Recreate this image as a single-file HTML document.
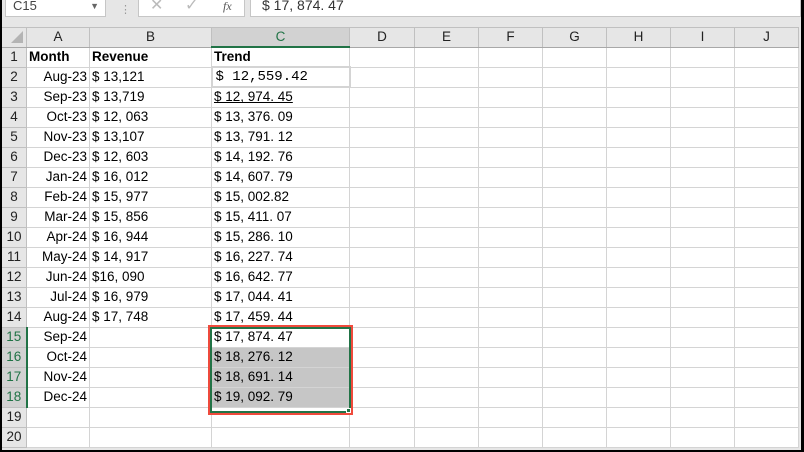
<!DOCTYPE html>
<html><head><meta charset="utf-8"><style>
*{margin:0;padding:0;box-sizing:border-box}
body{width:804px;height:452px;overflow:hidden;background:#e6e6e6;font-family:"Liberation Sans",sans-serif;position:relative}
.box{position:absolute;background:#fff;border:1px solid #c6c6c6;border-top:none}
table{position:absolute;left:1px;top:27px;border-collapse:collapse;table-layout:fixed;background:#fff}
td{border:1px solid #d4d4d4;height:20px;font-size:13.5px;color:#000;white-space:nowrap;overflow:hidden;padding:0 2px;line-height:18px}
tr.h td{background:#e6e6e6;height:19px;text-align:center;color:#222;border-color:#c0c0c0;border-bottom:1px solid #a8a8a8}
td.rh{background:#e6e6e6;text-align:center;color:#222;padding:0;border-color:#c0c0c0}
td.rs{background:#d2d2d2;color:#217346;border-right:2px solid #217346}
td.a{text-align:right}
td.g{background:#c6c6c6}
b{font-weight:bold}
</style></head><body>
<div style="position:absolute;left:0;top:0;width:2px;height:452px;background:#000;z-index:5"></div>
<div style="position:absolute;right:0;top:0;width:3px;height:452px;background:#000;z-index:5"></div>
<div style="position:absolute;left:0;bottom:0;width:804px;height:2px;background:#000;z-index:5"></div>
<div class="box" style="left:5px;top:0;width:101px;height:17px;font-size:13px;color:#444;padding-left:7px;line-height:12px">C15<span style="position:absolute;right:6px;top:0;font-size:9px;color:#666">▼</span></div>
<div style="position:absolute;left:120px;top:3px;font-size:11px;color:#999">⋮</div>
<div class="box" style="left:138px;top:0;width:107px;height:17px;font-size:16px;color:#bbb;line-height:12px"><span style="position:absolute;left:11px">✕</span><span style="position:absolute;left:46px">✓</span><span style="position:absolute;left:84px;font-style:italic;font-size:12px;color:#555;font-family:'Liberation Serif',serif">fx</span></div>
<div class="box" style="left:250px;top:0;width:551px;height:17px;font-size:14px;color:#333;padding-left:11px;line-height:11px">$ 17, 874. 47</div>
<table>
<colgroup><col style="width:25px"><col style="width:63px"><col style="width:122px"><col style="width:138px"><col style="width:65px"><col style="width:64px"><col style="width:64px"><col style="width:64px"><col style="width:64px"><col style="width:64px"><col style="width:64px"></colgroup>
<tr class="h"><td></td><td>A</td><td>B</td><td style="background:#d2d2d2;color:#217346;border-bottom:2px solid #217346">C</td><td>D</td><td>E</td><td>F</td><td>G</td><td>H</td><td>I</td><td>J</td></tr>
<tr><td class="rh">1</td><td><b>Month</b></td><td><b>Revenue</b></td><td><b>Trend</b></td><td></td><td></td><td></td><td></td><td></td><td></td><td></td></tr>
<tr><td class="rh">2</td><td class="a">Aug-23</td><td>$ 13,121</td><td style="font-family:'Liberation Mono',monospace;font-size:14px;border:2px solid #d4d4d4;padding-left:3px">$ 12,559.42</td><td></td><td></td><td></td><td></td><td></td><td></td><td></td></tr>
<tr><td class="rh">3</td><td class="a">Sep-23</td><td>$ 13,719</td><td><u>$ 12, 974. 45</u></td><td></td><td></td><td></td><td></td><td></td><td></td><td></td></tr>
<tr><td class="rh">4</td><td class="a">Oct-23</td><td>$ 12, 063</td><td>$ 13, 376. 09</td><td></td><td></td><td></td><td></td><td></td><td></td><td></td></tr>
<tr><td class="rh">5</td><td class="a">Nov-23</td><td>$ 13,107</td><td>$ 13, 791. 12</td><td></td><td></td><td></td><td></td><td></td><td></td><td></td></tr>
<tr><td class="rh">6</td><td class="a">Dec-23</td><td>$ 12, 603</td><td>$ 14, 192. 76</td><td></td><td></td><td></td><td></td><td></td><td></td><td></td></tr>
<tr><td class="rh">7</td><td class="a">Jan-24</td><td>$ 16, 012</td><td>$ 14, 607. 79</td><td></td><td></td><td></td><td></td><td></td><td></td><td></td></tr>
<tr><td class="rh">8</td><td class="a">Feb-24</td><td>$ 15, 977</td><td>$ 15, 002.82</td><td></td><td></td><td></td><td></td><td></td><td></td><td></td></tr>
<tr><td class="rh">9</td><td class="a">Mar-24</td><td>$ 15, 856</td><td>$ 15, 411. 07</td><td></td><td></td><td></td><td></td><td></td><td></td><td></td></tr>
<tr><td class="rh">10</td><td class="a">Apr-24</td><td>$ 16, 944</td><td>$ 15, 286. 10</td><td></td><td></td><td></td><td></td><td></td><td></td><td></td></tr>
<tr><td class="rh">11</td><td class="a">May-24</td><td>$ 14, 917</td><td>$ 16, 227. 74</td><td></td><td></td><td></td><td></td><td></td><td></td><td></td></tr>
<tr><td class="rh">12</td><td class="a">Jun-24</td><td>$16, 090</td><td>$ 16, 642. 77</td><td></td><td></td><td></td><td></td><td></td><td></td><td></td></tr>
<tr><td class="rh">13</td><td class="a">Jul-24</td><td>$ 16, 979</td><td>$ 17, 044. 41</td><td></td><td></td><td></td><td></td><td></td><td></td><td></td></tr>
<tr><td class="rh">14</td><td class="a">Aug-24</td><td>$ 17, 748</td><td>$ 17, 459. 44</td><td></td><td></td><td></td><td></td><td></td><td></td><td></td></tr>
<tr><td class="rh rs">15</td><td class="a">Sep-24</td><td></td><td>$ 17, 874. 47</td><td></td><td></td><td></td><td></td><td></td><td></td><td></td></tr>
<tr><td class="rh rs">16</td><td class="a">Oct-24</td><td></td><td class="g">$ 18, 276. 12</td><td></td><td></td><td></td><td></td><td></td><td></td><td></td></tr>
<tr><td class="rh rs">17</td><td class="a">Nov-24</td><td></td><td class="g">$ 18, 691. 14</td><td></td><td></td><td></td><td></td><td></td><td></td><td></td></tr>
<tr><td class="rh rs">18</td><td class="a">Dec-24</td><td></td><td class="g">$ 19, 092. 79</td><td></td><td></td><td></td><td></td><td></td><td></td><td></td></tr>
<tr><td class="rh">19</td><td></td><td></td><td></td><td></td><td></td><td></td><td></td><td></td><td></td><td></td></tr>
<tr><td class="rh">20</td><td></td><td></td><td></td><td></td><td></td><td></td><td></td><td></td><td></td><td></td></tr>
</table>
<svg width="12" height="12" style="position:absolute;left:11px;top:31px"><path d="M12 0L12 12L0 12Z" fill="#b4b4b4"/></svg>
<div style="position:absolute;left:208px;top:325px;width:145px;height:90px;border:2px solid #ef4a3c"></div>
<div style="position:absolute;left:210px;top:327px;width:141px;height:86px;border:2px solid #217346"></div>
<div style="position:absolute;left:346px;top:408px;width:5px;height:5px;background:#217346;border:1px solid #fff"></div>
</body></html>
